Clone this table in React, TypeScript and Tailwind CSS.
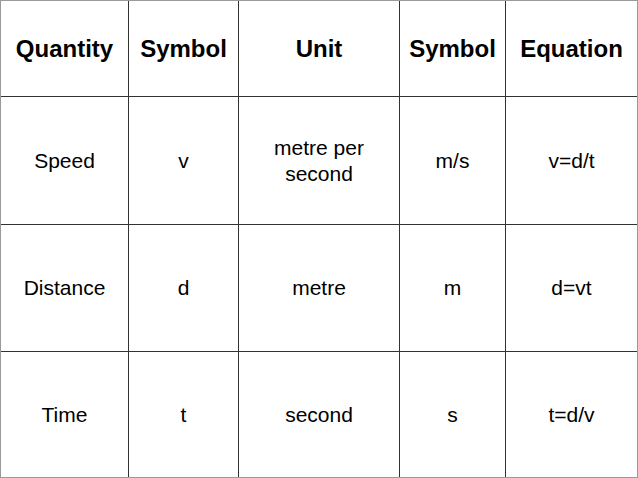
const header = ["Quantity", "Symbol", "Unit", "Symbol", "Equation"];

const rows: string[][] = [
  ["Speed", "v", "metre per second", "m/s", "v=d/t"],
  ["Distance", "d", "metre", "m", "d=vt"],
  ["Time", "t", "second", "s", "t=d/v"],
];

export default function App() {
  return (
    <div
      className="w-[638px] h-[478px] bg-white border border-[#9a9a9a] text-black"
      style={{ fontFamily: '"Liberation Sans", Arial, sans-serif' }}
    >
      <div className="grid h-full grid-cols-[127px_109px_160px_105px_131px] grid-rows-[95px_127px_126px_125px] gap-px bg-[#333333]">
        {header.map((h, i) => (
          <div
            key={"h" + i}
            className="bg-white flex items-center justify-center text-[24px] font-bold"
          >
            {h}
          </div>
        ))}
        {rows.map((r, ri) =>
          r.map((c, ci) => (
            <div
              key={ri + "-" + ci}
              className="bg-white flex items-center justify-center text-center text-[21px] leading-[26px] px-4"
            >
              {c === "metre per second" ? (
                <span>
                  metre per
                  <br />
                  second
                </span>
              ) : (
                c
              )}
            </div>
          ))
        )}
      </div>
    </div>
  );
}
